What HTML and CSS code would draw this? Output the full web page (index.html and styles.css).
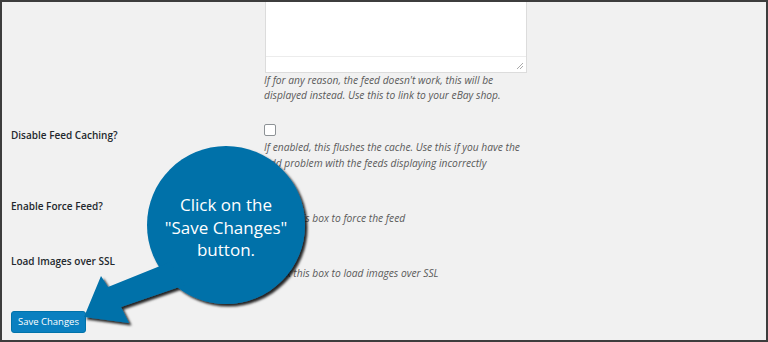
FILE: index.html
```html
<!DOCTYPE html>
<html>
<head>
<meta charset="utf-8">
<link rel="stylesheet" href="styles.css">
</head>
<body>
<div class="frame">
  <div class="form">
    <div class="row row-first">
      <div class="label"></div>
      <div class="field">
        <div class="textarea"><span class="grip"></span></div>
        <p class="desc">If for any reason, the feed doesn't work, this will be<br>displayed instead. Use this to link to your eBay shop.</p>
      </div>
    </div>
    <div class="row">
      <div class="label">Disable Feed Caching?</div>
      <div class="field">
        <span class="checkbox"></span>
        <p class="desc">If enabled, this flushes the cache. Use this if you have the<br>odd problem with the feeds displaying incorrectly</p>
      </div>
    </div>
    <div class="row">
      <div class="label">Enable Force Feed?</div>
      <div class="field">
        <span class="checkbox"></span>
        <p class="desc">Check this box to force the feed</p>
      </div>
    </div>
    <div class="row">
      <div class="label">Load Images over SSL</div>
      <div class="field">
        <span class="checkbox"></span>
        <p class="desc">Check this box to load images over SSL</p>
      </div>
    </div>
    <div class="actions">
      <span class="button">Save Changes</span>
    </div>
  </div>

  <svg class="callout-shape" width="768" height="342" viewBox="0 0 768 342">
    <defs>
      <filter id="shadow" x="-20%" y="-20%" width="140%" height="140%">
        <feDropShadow dx="2.5" dy="2.5" stdDeviation="1" flood-color="#000" flood-opacity="0.85"/>
      </filter>
    </defs>
    <g filter="url(#shadow)" fill="#0071a9">
      <circle cx="226" cy="225" r="79"/>
      <polygon points="84,317 101,276 108,287 170,262 185,285 121,307 129,323"/>
    </g>
  </svg>
  <div class="callout-text">Click on the<br>"Save Changes"<br>button.</div>
</div>
</body>
</html>
```
FILE: styles.css
```css
html, body {
  margin: 0;
  padding: 0;
  background: #f1f1f1;
}
.frame {
  position: relative;
  width: 768px;
  height: 342px;
  box-sizing: border-box;
  border: 2px solid #3d3d3d;
  background: #f1f1f1;
  overflow: hidden;
  padding-left: 9px;
  font-family: "Open Sans", "Noto Sans", sans-serif;
  color: #23282d;
}
.form {
  display: flex;
  flex-direction: column;
}
.row {
  display: flex;
}
.label {
  width: 253px;
  flex: none;
  padding-top: 15px;
  font-size: 10px;
  font-weight: 600;
  line-height: 16px;
}
.field {
  width: 270px;
  flex: none;
  padding: 12px 0;
  display: flex;
  flex-direction: column;
}
.row-first .field {
  padding-top: 0;
  padding-bottom: 9px;
}
.textarea {
  position: relative;
  margin-left: 1px;
  width: 262px;
  height: 71px;
  box-sizing: border-box;
  background: #fff;
  border: 1px solid #dcdcdc;
  border-top: none;
}
.textarea::after {
  content: "";
  position: absolute;
  left: 0;
  right: 0;
  top: 54px;
  height: 1px;
  background: #ececec;
}
.grip {
  position: absolute;
  right: 3px;
  bottom: 3px;
  width: 6px;
  height: 6px;
  background: linear-gradient(135deg, transparent 45%, #aaa 45%, #aaa 55%, transparent 55%, transparent 70%, #aaa 70%, #aaa 80%, transparent 80%);
}
.checkbox {
  display: block;
  width: 12px;
  height: 12px;
  box-sizing: border-box;
  border: 1px solid #8d9296;
  border-radius: 2px;
  background: #fff;
  margin-bottom: 3px;
}
.desc {
  margin: 0;
  font-size: 10.25px;
  font-style: italic;
  line-height: 16px;
  color: #5a5a5a;
  white-space: nowrap;
}
.row-first .desc {
  line-height: 15px;
  margin-top: 0;
}
.actions {
  padding-top: 15px;
}
.button {
  display: inline-flex;
  align-items: center;
  justify-content: center;
  width: 75px;
  height: 22px;
  box-sizing: border-box;
  background: #0a80c0;
  border: 1px solid #0073aa;
  border-radius: 3px;
  color: #fff;
  font-size: 9.5px;
}
.callout-shape {
  position: absolute;
  left: -2px;
  top: -2px;
}
.callout-text {
  position: absolute;
  left: 145px;
  top: 192px;
  width: 158px;
  text-align: center;
  color: #fff;
  font-size: 17px;
  line-height: 22.5px;
}
```
